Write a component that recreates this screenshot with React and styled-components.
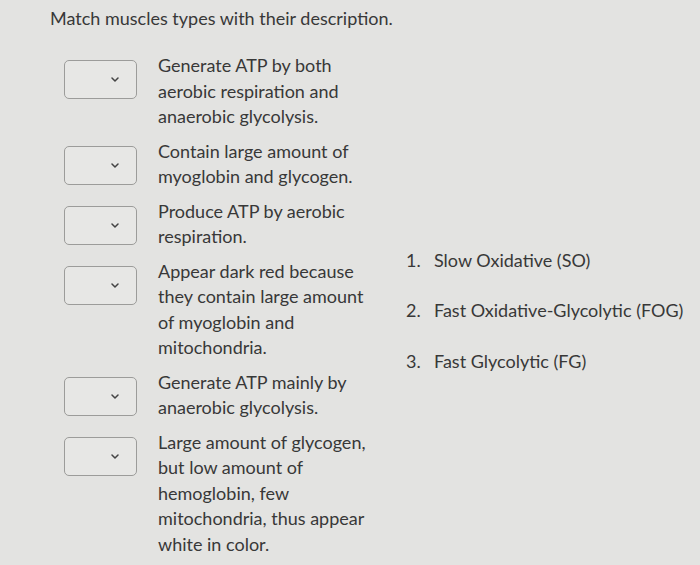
import React from 'react';
import styled, { createGlobalStyle } from 'styled-components';

const GlobalStyle = createGlobalStyle`
  html, body {
    margin: 0;
    padding: 0;
    background: #e3e3e1;
  }
  body {
    font-family: Lato, "Open Sans", "Liberation Sans", sans-serif;
    color: #383838;
  }
`;

const Page = styled.div`
  width: 700px;
  height: 565px;
  overflow: hidden;
  padding: 5px 0 0 50px;
  box-sizing: border-box;
  background: #e3e3e1;
`;

const Prompt = styled.p`
  margin: 0 0 22px 0;
  font-size: 18px;
  line-height: 26px;
`;

const Body = styled.div`
  display: flex;
  align-items: center;
`;

const Rows = styled.div`
  display: flex;
  flex-direction: column;
  gap: 9px;
  padding-left: 14px;
`;

const Row = styled.div`
  display: flex;
  align-items: flex-start;
  gap: 21px;
`;

const Select = styled.div`
  flex-shrink: 0;
  width: 73px;
  height: 39px;
  margin-top: 7px;
  box-sizing: border-box;
  border: 1.5px solid #9c9c9a;
  border-radius: 5px;
  background: #e7e7e5;
  display: flex;
  align-items: center;
  justify-content: flex-end;
  padding-right: 17px;
`;

const Description = styled.div`
  width: 216px;
  font-size: 18px;
  line-height: 25.5px;
`;

const Options = styled.ol`
  list-style: none;
  margin: 12px 0 0 32px;
  padding: 0;
  display: flex;
  flex-direction: column;
  gap: 25px;
`;

const Option = styled.li`
  display: flex;
  font-size: 18px;
  line-height: 25.5px;
  white-space: nowrap;
`;

const Num = styled.span`
  width: 28px;
  flex-shrink: 0;
`;

const Chevron = () => (
  <svg width="8" height="5" viewBox="0 0 8 5">
    <path d="M1 1 L4 4 L7 1" fill="none" stroke="#444" strokeWidth="1.5" strokeLinecap="round" strokeLinejoin="round" />
  </svg>
);

const descriptions = [
  'Generate ATP by both aerobic respiration and anaerobic glycolysis.',
  'Contain large amount of myoglobin and glycogen.',
  'Produce ATP by aerobic respiration.',
  'Appear dark red because they contain large amount of myoglobin and mitochondria.',
  'Generate ATP mainly by anaerobic glycolysis.',
  'Large amount of glycogen, but low amount of hemoglobin, few mitochondria, thus appear white in color.',
];

const choices = ['Slow Oxidative (SO)', 'Fast Oxidative-Glycolytic (FOG)', 'Fast Glycolytic (FG)'];

export default function App() {
  return (
    <>
      <GlobalStyle />
      <Page>
        <Prompt>Match muscles types with their description.</Prompt>
        <Body>
          <Rows>
            {descriptions.map((text, i) => (
              <Row key={i}>
                <Select>
                  <Chevron />
                </Select>
                <Description>{text}</Description>
              </Row>
            ))}
          </Rows>
          <Options>
            {choices.map((c, i) => (
              <Option key={i}>
                <Num>{i + 1}.</Num>
                {c}
              </Option>
            ))}
          </Options>
        </Body>
      </Page>
    </>
  );
}
